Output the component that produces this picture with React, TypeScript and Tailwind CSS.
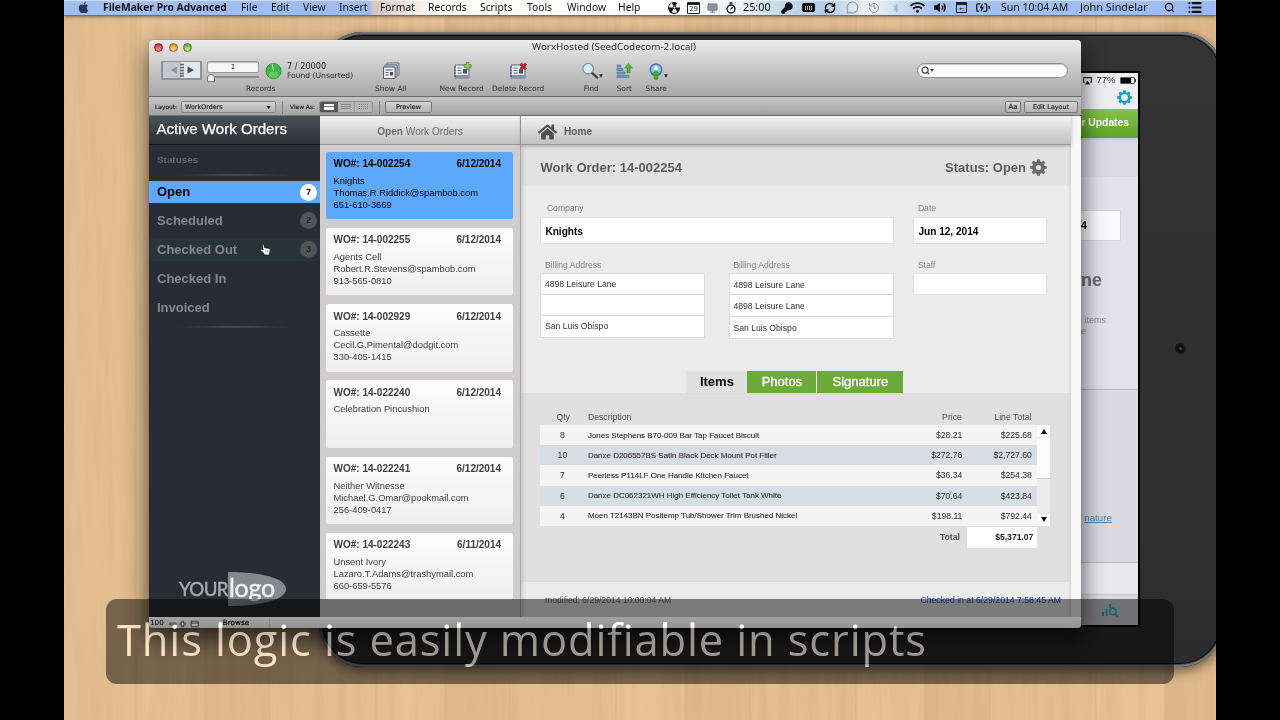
import React from 'react';
import { FaApple, FaHome, FaRadiation, FaWifi, FaBluetoothB } from 'react-icons/fa';
import { FiVolume2 } from 'react-icons/fi';
import {
  BatteryCharging,
  History,
  KeyRound,
  List,
  MessageCircle,
  Monitor,
  RefreshCw,
  Search,
  Timer,
} from 'lucide-react';

interface WorkOrder {
  id: string;
  date: string;
  lines: string[];
}

interface LineItem {
  qty: number;
  description: string;
  price: string;
  total: string;
}

const menus = [
  { label: 'File', width: 'w-[30px]' },
  { label: 'Edit', width: 'w-[32px]' },
  { label: 'View', width: 'w-[36px]' },
  { label: 'Insert', width: 'w-[41px]' },
  { label: 'Format', width: 'w-[48px]' },
  { label: 'Records', width: 'w-[52px]' },
  { label: 'Scripts', width: 'w-[47px]' },
  { label: 'Tools', width: 'w-[40px]' },
  { label: 'Window', width: 'w-[51px]' },
  { label: 'Help', width: 'w-[50px]' },
];

const statuses = [
  { label: 'Open', count: 7 },
  { label: 'Scheduled', count: 2 },
  { label: 'Checked Out', count: 3 },
  { label: 'Checked In' },
  { label: 'Invoiced' },
];

const workOrders: WorkOrder[] = [
  {
    id: '14-002254',
    date: '6/12/2014',
    lines: ['Knights', 'Thomas.R.Riddick@spambob.com', '651-610-3669'],
  },
  {
    id: '14-002255',
    date: '6/12/2014',
    lines: ['Agents Cell', 'Robert.R.Stevens@spambob.com', '913-565-0810'],
  },
  {
    id: '14-002929',
    date: '6/12/2014',
    lines: ['Cassette', 'Cecil.G.Pimental@dodgit.com', '330-405-1415'],
  },
  { id: '14-022240', date: '6/12/2014', lines: ['Celebration Pincushion'] },
  {
    id: '14-022241',
    date: '6/12/2014',
    lines: ['Neither Witnesse', 'Michael.G.Omar@pookmail.com', '256-409-0417'],
  },
  {
    id: '14-022243',
    date: '6/11/2014',
    lines: ['Unsent Ivory', 'Lazaro.T.Adams@trashymail.com', '660-659-5576'],
  },
];

const items: LineItem[] = [
  { qty: 8, description: 'Jones Stephens B70-009 Bar Tap Faucet Biscuit', price: '$28.21', total: '$225.68' },
  { qty: 10, description: 'Danze D206557BS Satin Black Deck Mount Pot Filler', price: '$272.76', total: '$2,727.60' },
  { qty: 7, description: 'Peerless P114LF One Handle Kitchen Faucet', price: '$36.34', total: '$254.38' },
  { qty: 6, description: 'Danze DC062321WH High Efficiency Toilet Tank White', price: '$70.64', total: '$423.84' },
  { qty: 4, description: 'Moen T2143BN Positemp Tub/Shower Trim Brushed Nickel', price: '$198.11', total: '$792.44' },
];

function Gear({ className, hole }: { className?: string; hole: number }) {
  return (
    <svg viewBox="-10 -10 20 20" className={className}>
      <g fill="currentColor">
        {[0, 45, 90, 135, 180, 225, 270, 315].map((a) => (
          <path key={a} d="M-2.2 -6 L-1.6 -9.8 H1.6 L2.2 -6 Z" transform={`rotate(${a})`} />
        ))}
      </g>
      <circle r={(7.4 + hole) / 2} fill="none" stroke="currentColor" strokeWidth={7.4 - hole} />
    </svg>
  );
}

function Wood() {
  return (
    <>
      <div className="absolute inset-0 bg-[#e3be91]" />
      <div className="absolute inset-0 bg-[repeating-linear-gradient(90deg,#e2bd8e00_0px,#e2bd8e00_71px,#b98c5a33_72px,#ecca9f55_73px,#ecca9f44_140px,#b98c5a33_141px,#c99f6c33_142px,#c99f6c22_205px,#b98c5a33_206px,#e2bd8e00_207px,#e2bd8e00_240px)]" />
      <svg className="absolute inset-0 h-full w-full opacity-40">
        <filter id="grain" x="0" y="0" width="100%" height="100%">
          <feTurbulence type="fractalNoise" baseFrequency="0.12 0.008" numOctaves="4" seed="7" />
          <feColorMatrix values="0 0 0 0 0.6  0 0 0 0 0.4  0 0 0 0 0.2  1.6 0 0 0 -0.6" />
        </filter>
        <rect width="100%" height="100%" filter="url(#grain)" />
      </svg>
    </>
  );
}

function MenuBar() {
  return (
    <div className="relative flex h-[16px] items-center border-b border-[#5d6f93] bg-[linear-gradient(90deg,#9fc0f3_0%,#9cbcf0_26.5%,#d8c2bf_26.8%,#e9dfda_29.5%,#fdfcfb_32%,#fff_53%,#e9f0f5_59%,#c5dbe8_62%,#b6cbe8_66%,#eef3f7_70%,#c6d8f2_73%,#a3c1f2_76%,#9bbbf0_100%)] pl-[13px] font-['Noto_Sans',sans-serif] text-[10.3px] leading-none whitespace-nowrap text-[#111] shadow-[0_1px_3px_#0006,inset_0_1px_1px_#fff8]">
      <FaApple className="h-[13px] w-[13px] text-[#2b3550]" />
      <span className="ml-[13px] w-[138px] font-bold">FileMaker Pro Advanced</span>
      {menus.map((menu) => (
        <span key={menu.label} className={menu.width}>
          {menu.label}
        </span>
      ))}
      <div className="flex w-[75px] items-center gap-[7px]">
        <span className="flex h-[12px] w-[12px] items-center justify-center rounded-full bg-[#111]">
          <FaRadiation className="h-[11px] w-[11px] text-white" />
        </span>
        <span className="flex h-[12px] w-[13px] items-center justify-center rounded-[1px] border border-t-[3px] border-[#222] bg-white text-[7.5px] leading-none">
          29
        </span>
        <Monitor className="h-[12px] w-[11px] fill-[#8a93a8] text-[#777]" />
        <Timer className="h-[12px] w-[12px]" strokeWidth={2.6} />
      </div>
      <span className="w-[38px] text-[10.8px]">25:00</span>
      <div className="flex w-[220px] items-center">
        <KeyRound className="h-[12px] w-[12px] fill-[#111]" strokeWidth={3} />
        <span className="ml-[9px] flex h-[9px] w-[13px] items-center justify-center gap-[1px] rounded-[2px] bg-[#111]">
          <i className="h-[4px] w-px bg-[#9ab]" />
          <i className="h-[4px] w-px bg-[#9ab]" />
          <i className="h-[4px] w-px bg-[#9ab]" />
          <i className="h-[4px] w-px bg-[#9ab]" />
        </span>
        <RefreshCw className="ml-[9px] h-[12px] w-[12px]" strokeWidth={3} />
        <MessageCircle className="ml-[10px] h-[13px] w-[13px] text-[#8d99a6]" />
        <History className="ml-[9px] h-[12px] w-[12px] text-[#8d99a6]" />
        <FaBluetoothB className="ml-[11px] h-[10px] w-[10px] text-[#a2adb8]" />
        <FaWifi className="ml-[9px] h-[13px] w-[15px]" />
        <FiVolume2 className="ml-[8px] h-[13px] w-[14px] fill-[#111]" />
        <span className="ml-[9px] flex h-[11px] w-[11px] items-center justify-center border-[1.5px] border-t-[3px] border-[#222] text-[6px] font-bold">
          +:
        </span>
        <BatteryCharging className="ml-[8px] h-[15px] w-[16px]" />
      </div>
      <span className="w-[79px] text-[10.5px]">Sun 10:04 AM</span>
      <span className="w-[84px] text-[10.9px]">John Sindelar</span>
      <Search className="h-[11px] w-[11px]" strokeWidth={3} />
      <List className="ml-[12px] h-[15px] w-[16px]" strokeWidth={3.4} />
    </div>
  );
}

function Tablet() {
  return (
    <div className="absolute top-[32px] left-[255px] flex h-[635px] w-[905px] justify-end rounded-[44px] bg-[#0c0c0c] p-[4px] shadow-[inset_0_0_0_2px_#77767a,inset_0_0_0_3px_#4a494b,0_4px_12px_#0008]">
      <div className="flex flex-1 items-stretch justify-end rounded-[40px] bg-[linear-gradient(180deg,#333_0%,#303030_70%,#2c2c2c_100%)]">
        <div className="mt-[35px] mb-[36px] flex w-[700px] flex-col items-stretch border-2 border-l-0 border-black bg-[#e4e2e9] font-['Liberation_Sans',Arial,sans-serif]">
          <div className="flex h-[15px] items-center justify-end gap-[4px] bg-[#eeedf1] pr-[2px] text-[9.5px] text-[#333]">
            <svg viewBox="0 0 10 9" className="h-[8px] w-[9px]">
              <path d="M2 6H.7V.7h8.6V6H8" fill="none" stroke="#222" strokeWidth="1.2" />
              <path d="M5 4l3 4.500H2z" fill="#222" />
            </svg>
            <span>77%</span>
            <span className="flex items-center">
              <i className="h-[7px] w-[15px] rounded-[1px] border border-[#555] bg-[linear-gradient(90deg,#000_78%,#eee_78%)]" />
              <i className="h-[3px] w-[1.500px] bg-[#333]" />
            </span>
          </div>
          <div className="flex h-[21px] items-center justify-end bg-[#eeedf1] pr-[6px] pb-[2px]">
            <Gear className="h-[15px] w-[15px] text-[#12a3bf]" hole={4.6} />
          </div>
          <div className="flex h-[29px] items-center justify-end bg-[linear-gradient(180deg,#82c443,#5fa42a)] pr-[9px] pb-[2px] text-[10.3px] font-bold text-white">
            r Updates
          </div>
          <div className="h-[39px] bg-[#dddbe2] shadow-[inset_0_2px_2px_#0001]" />
          <div className="mt-[33px] flex h-[31px] justify-end pr-[17px]">
            <div className="flex w-[60px] items-center border border-[#d6d4db] bg-[#fafafc] pl-[19px] text-[10.500px] font-bold text-black">
              4
            </div>
          </div>
          <div className="mt-[29px] flex justify-end pr-[36px] text-[18px] leading-[20px] font-bold text-[#6b6a6e]">
            ne
          </div>
          <div className="mt-[25px] flex justify-end pr-[32px] text-[9px] leading-[11px] text-[#8b8990]">
            items
          </div>
          <div className="flex justify-end pr-[52px] text-[9px] leading-[10px] text-[#8b8990]">e</div>
          <div className="mt-[53px] flex h-[174px] items-end justify-end border-y border-[#b9b7be] bg-[#dcdae1] pr-[26px] pb-[36px] text-[9.8px] text-[#4a7fae]">
            <span className="underline">nature</span>
          </div>
          <div className="h-[31px] bg-[#e8e7ec]" />
          <div className="flex flex-1 items-center justify-end border-t border-[#c5c5cc] bg-[#d9d8de] pt-[2px] pr-[20px]">
            <svg viewBox="0 0 16 14" className="h-[14px] w-[16px]" fill="none" stroke="#16c4dc" strokeWidth="2">
              <path d="M1 12V8M4.500 12V5M8 4V0" />
              <circle cx="11" cy="7.500" r="3.300" strokeWidth="1.400" />
              <path d="M13.500 10l2.500 3.500" strokeWidth="1.600" />
            </svg>
          </div>
        </div>
        <div className="flex w-[80px] items-start justify-center pt-[307px]">
          <i className="h-[11px] w-[11px] rounded-full bg-[radial-gradient(circle,#4d4d4d_8%,#0d0d0d_30%,#1b1b1b_70%,#2c2c2c)]" />
        </div>
      </div>
    </div>
  );
}

function RecordIcon({ badge }: { badge: 'add' | 'delete' }) {
  return (
    <svg viewBox="0 0 20 18" className="h-[18px] w-[20px]">
      <path d="M3 3h14v13H3z" fill="#eef1f4" stroke="#5d6c7c" />
      <path d="M3 13h14v3H3z" fill="#8796a6" />
      <path d="M5.500 6h4M5.500 8.500h4M5.500 11h4" stroke="#5d6c7c" />
      <path d="M11 7h4v4.500h-4z" fill="#4a5664" />
      <path d="M2 5h2M2 8h2M2 11h2M2 14h2" stroke="#333" strokeWidth=".8" />
      {badge === 'add' ? (
        <path d="M14.300 .5h2.600v2.200h2.300v2.600h-2.300v2.300h-2.600V5.300h-2.300V2.700h2.300z" fill="#9bd04d" stroke="#3f7d1d" strokeWidth=".7" />
      ) : (
        <path d="M12.500 1.500l5.500 6M18 1.500l-5.500 6" stroke="#b8282c" strokeWidth="2.800" />
      )}
    </svg>
  );
}

function ToolButton({ label, children }: { label: string; children: React.ReactNode }) {
  return (
    <div className="flex flex-col items-center">
      <div className="flex h-[20px] items-center">{children}</div>
      <span className="mt-[3px] leading-[10px]">{label}</span>
    </div>
  );
}

function Toolbar() {
  return (
    <div className="flex h-[57px] flex-col rounded-t-[4px] border-b border-[#6a6a6a] bg-[linear-gradient(180deg,#ececec_0%,#d2d2d2_35%,#a9a8a9_100%)] font-['DejaVu_Sans',sans-serif] text-[7.4px] whitespace-nowrap text-[#2c2c2c]">
      <div className="flex h-[15px] items-center">
        <div className="flex w-[60px] gap-[5.5px] pl-[5px]">
          <i className="h-[9px] w-[9px] rounded-full border border-[#8c2a28] bg-[radial-gradient(circle_at_50%_75%,#ff9a8f,#c8302c_70%)]" />
          <i className="h-[9px] w-[9px] rounded-full border border-[#9c6a22] bg-[radial-gradient(circle_at_50%_75%,#ffe08a,#dd9526_70%)]" />
          <i className="h-[9px] w-[9px] rounded-full border border-[#4f8030] bg-[radial-gradient(circle_at_50%_75%,#d0f59a,#66a93a_70%)]" />
        </div>
        <span className="flex-1 pr-[62px] text-center font-['Noto_Sans',sans-serif] text-[9.8px] text-[#333]">
          WorxHosted (SeedCodecom-2.local)
        </span>
      </div>
      <div className="flex h-[41px] items-start pl-[12px]">
        <div className="flex h-[39px] flex-col">
          <div className="flex h-[28px] items-start pt-[6px]">
            <div className="flex h-[19px] w-[41px] items-center justify-center border-2 border-t border-[#8c9298] bg-[linear-gradient(90deg,#c3c8cc_50%,#e5e8ea_50%)]">
              <svg viewBox="0 0 34 14" className="h-[14px] w-[34px]">
                <path d="M12 3.500v7L5.500 7z" fill="#8e959b" />
                <path d="M22.500 3.500v7l6.500-3.500z" fill="#4a5056" />
                <path d="M15 1.500h4M15 4.500h4M15 7.500h4M15 10.500h4M15 13h4" stroke="#5a6066" strokeWidth="1.300" />
              </svg>
            </div>
            <div className="ml-[5px] w-[52px]">
              <div className="h-[12px] rounded-[2px] border border-[#999] bg-[#f6f6f6] text-center text-[7px] leading-[11px] text-[#222] shadow-[inset_0_1px_1px_#0004]">
                1
              </div>
              <div className="mt-[3px] h-[2px] bg-[#8b8b8b]">
                <i className="block h-[8px] w-[8px] -translate-y-[2px] rounded-full rounded-b-[3px] border border-[#777] bg-[#f2f2f2]" />
              </div>
            </div>
            <svg viewBox="0 0 18 18" className="mt-px ml-[6px] h-[18px] w-[17px]">
              <circle cx="9" cy="9" r="8" fill="#42b649" stroke="#2f8c35" />
              <path d="M9 9L7.500 1.300" stroke="#c8f0c6" strokeWidth="1" />
              <ellipse cx="9" cy="13" rx="5" ry="3.500" fill="#6fd96a" opacity=".6" />
            </svg>
            <div className="ml-[5px] flex flex-col text-[#222]">
              <span className="text-[8.200px] leading-[10px]">7 / 20000</span>
              <span className="text-[7.600px] leading-[10px]">Found (Unsorted)</span>
            </div>
          </div>
          <span className="mt-px pl-[85px] leading-[10px]">Records</span>
        </div>
        <div className="ml-[22px] flex pt-[6px]">
          <ToolButton label="Show All">
            <svg viewBox="0 0 18 18" className="h-[18px] w-[18px]">
              <path d="M5 1h12v12h-2V3H5z" fill="#d5dade" stroke="#56616c" strokeWidth=".8" />
              <path d="M3 3h12v12h-2V5H3z" fill="#d5dade" stroke="#56616c" strokeWidth=".8" />
              <path d="M1.500 5h11.500v11.500H1.500z" fill="#eef0f2" stroke="#56616c" />
              <path d="M3.500 8h7M3.500 10.500h3M3.500 13h3" stroke="#56616c" />
              <path d="M8 10h3v3.500H8z" fill="#444f5a" />
            </svg>
          </ToolButton>
          <div className="ml-[33px]">
            <ToolButton label="New Record">
              <RecordIcon badge="add" />
            </ToolButton>
          </div>
          <div className="ml-[8.5px]">
            <ToolButton label="Delete Record">
              <RecordIcon badge="delete" />
            </ToolButton>
          </div>
          <div className="ml-[35px]">
            <ToolButton label="Find">
              <svg viewBox="-1 0 24 20" className="h-[19px] w-[24px]">
                <path d="M11.500 11l6 5.500" stroke="#444" strokeWidth="2.500" strokeLinecap="round" />
                <circle cx="8" cy="7" r="5.500" fill="#d3edf2" stroke="#7c929d" strokeWidth="1.300" />
                <path d="M19.500 13h4l-2 3.500z" fill="#222" />
              </svg>
            </ToolButton>
          </div>
          <div className="ml-[12px]">
            <ToolButton label="Sort">
              <svg viewBox="0 0 18 18" className="h-[18px] w-[18px]">
                <path d="M2 3h4v2H2zM2 6.500h6v2H2zM2 10h8v2H2zM2 13.500h12v2H2z" fill="#6f9cc4" stroke="#44698c" strokeWidth=".6" />
                <path d="M13.500 1.500L17.500 6H15v5h-3V6H9.500z" fill="#4dbb38" stroke="#2b8420" strokeWidth=".5" />
              </svg>
            </ToolButton>
          </div>
          <div className="ml-[11px]">
            <ToolButton label="Share">
              <svg viewBox="-1 0 24 20" className="h-[19px] w-[24px]">
                <circle cx="11" cy="8" r="6" fill="#8cc0ea" stroke="#3a78b4" strokeWidth="1.600" />
                <circle cx="11" cy="6.500" r="2.400" fill="#e4f2fb" />
                <path d="M11 9l4.500 4.500H13V18H9v-4.500H6.500z" fill="#45a92f" stroke="#2b7d1e" strokeWidth=".6" />
                <path d="M19.500 13h4l-2 3.500z" fill="#222" />
              </svg>
            </ToolButton>
          </div>
        </div>
        <div className="mt-[8px] mr-[13px] ml-auto flex h-[15px] w-[151px] items-center rounded-full border border-[#8c8c8c] bg-[#fbfbfb] pl-[3px] shadow-[inset_0_1px_1px_#0003]">
          <Search className="h-[9px] w-[9px] text-[#444]" strokeWidth={3} />
          <svg viewBox="0 0 4 3" className="h-[3px] w-[4px]">
            <path d="M0 0h4L2 3z" fill="#444" />
          </svg>
        </div>
      </div>
    </div>
  );
}

function LayoutBar() {
  return (
    <div className="flex h-[19px] items-center border-b border-[#707070] bg-[linear-gradient(180deg,#c4c4c4,#a5a4a5)] pt-[2px] pr-[3px] pl-[6px] font-['DejaVu_Sans',sans-serif] text-[6.4px] whitespace-nowrap text-[#1c1c1c] [-webkit-text-stroke:0.15px]">
      <span className="w-[26px] text-[5.9px]">Layout:</span>
      <span className="flex h-[12px] w-[95px] items-center justify-between rounded-[2px] border border-[#828282] bg-[linear-gradient(180deg,#d2d2d2,#b2b2b2)] pt-px pr-[4px] pl-[3px]">
        WorkOrders
        <svg viewBox="0 0 6 4" className="h-[3px] w-[5px]">
          <path d="M0 0h6L3 4z" fill="#111" />
        </svg>
      </span>
      <i className="ml-[6px] h-[13px] w-px bg-[#7d7d7d]" />
      <span className="ml-[7px] w-[29px] text-[5.9px]">View As:</span>
      <span className="flex h-[12px] w-[54px] overflow-hidden rounded-[2px] border border-[#8c8c8c] bg-[#b6b6b6]">
        <i className="flex h-full w-[18px] items-center justify-center bg-[#555]">
          <i className="h-[6px] w-[10px] bg-[linear-gradient(180deg,#fff_0_2px,#777_2px_3px,#fff_3px)]" />
        </i>
        <i className="flex h-full w-[17px] items-center justify-center border-r border-[#999]">
          <i className="h-[6px] w-[10px] bg-[repeating-linear-gradient(180deg,#888_0_1px,#bbb_1px_2px)]" />
        </i>
        <i className="flex h-full flex-1 items-center justify-center">
          <i className="h-[6px] w-[10px] bg-[repeating-linear-gradient(90deg,#bbb0_0_1px,#bbb_1px_2px),repeating-linear-gradient(180deg,#777_0_1px,#bbb_1px_2px)]" />
        </i>
      </span>
      <i className="ml-[6px] h-[13px] w-px bg-[#7d7d7d]" />
      <span className="ml-[5px] flex h-[12px] w-[47px] items-center justify-center rounded-[2px] border border-[#777] bg-[linear-gradient(180deg,#d4d4d4,#b4b4b4)] pt-px">
        Preview
      </span>
      <span className="ml-auto flex h-[12px] w-[16px] items-center justify-center rounded-[2px] border border-[#777] bg-[linear-gradient(180deg,#d4d4d4,#b4b4b4)] text-[7px]">
        Aa
      </span>
      <span className="ml-[3px] flex h-[12px] w-[54px] items-center justify-center rounded-[2px] border border-[#777] bg-[linear-gradient(180deg,#d4d4d4,#b4b4b4)] pt-px">
        Edit Layout
      </span>
    </div>
  );
}

function Sidebar() {
  return (
    <div className="relative flex w-[171px] flex-col bg-[#282d32]">
      <div className="flex h-[29px] items-center border-b border-[#14171a] bg-[linear-gradient(180deg,#475056,#2c3236)] pb-[2px] pl-[7.5px] text-[15.1px] text-white [-webkit-text-stroke:0.25px]">
        Active Work Orders
      </div>
      <div className="mt-[8px] h-[13px] pl-[8px] text-[9.9px] leading-[13px] font-bold text-[#62676b]">Statuses</div>
      <i className="mx-[28px] mt-[8px] h-[2px] bg-[linear-gradient(90deg,transparent,#454b50,transparent)]" />
      <div className="mt-[5px] flex flex-col gap-[6.85px]">
        {statuses.map((status, i) => (
          <div
            key={status.label}
            className={`flex h-[22px] items-center justify-between pr-[3px] pl-[8px] text-[13px] font-bold ${
              i === 0 ? 'bg-[#5ca8fa] text-black' : i === 2 ? 'bg-[#29333a] text-[#85898c]' : 'text-[#85898c]'
            }`}
          >
            {status.label}
            {status.count && (
              <span
                className={`flex h-[17px] w-[17px] items-center justify-center rounded-full text-[8.5px] ${
                  i === 0 ? 'bg-white text-black' : 'bg-[#505559] text-[#1d2124]'
                }`}
              >
                {status.count}
              </span>
            )}
          </div>
        ))}
      </div>
      <i className="mx-[28px] mt-[8px] h-[2px] bg-[linear-gradient(90deg,transparent,#454b50,transparent)]" />
      <div className="mt-auto mb-[11px] flex h-[34px] items-center pl-[30px] font-['Lato',sans-serif]">
        <span className="w-[49px] text-[18.7px] leading-none tracking-[-0.6px] text-[#a9acaf] [-webkit-text-stroke:0.4px]">
          YOUR
        </span>
        <div className="relative flex h-[34px] w-[58px] items-center">
          <svg viewBox="0 0 58 34" className="absolute inset-0 h-full w-full">
            <path d="M0 0C32 0 58 6 58 17S32 34 0 34Z" fill="#85898d" />
          </svg>
          <span className="relative pb-[3px] pl-[1px] text-[25px] leading-none tracking-[-0.3px] text-[#f2f2f2] [-webkit-text-stroke:0.4px]">
            logo
          </span>
        </div>
      </div>
      <svg viewBox="0 0 12 14" className="absolute top-[127px] left-[111px] h-[13px] w-[11px]">
        <path
          d="M2.500 1.500c.7-.6 1.500-.3 1.700.5L5 5l5 .8c.9.200 1.300.8 1.200 1.700L10.500 11 10 13H5L3.500 10.500 1 8c-.5-.8.200-1.500 1-1.200l1.500.8z"
          fill="#fff"
          stroke="#111"
          strokeWidth=".8"
        />
        <path d="M6.500 8v2M8.300 8v2" stroke="#333" strokeWidth=".6" />
      </svg>
    </div>
  );
}

function OrderList() {
  return (
    <div className="flex w-[200px] flex-col overflow-hidden bg-[#cfcdce]">
      <div className="flex h-[29px] shrink-0 items-center justify-center border-b border-[#979797] bg-[linear-gradient(180deg,#f2f2f2,#c2c1c2)] pt-[3px] text-[10.1px] text-[#6c6c6c]">
        <b>Open</b>&nbsp;Work Orders
      </div>
      <div className="mt-[6.5px] flex flex-col gap-[8.75px] pr-[7px] pl-[6px]">
        {workOrders.map((order, i) => (
          <div
            key={order.id}
            className={`flex h-[67.5px] flex-col rounded-[2px] pr-[12px] pl-[7.5px] ${
              i === 0 ? 'bg-[#5ca8fa] text-black' : 'bg-[linear-gradient(180deg,#fdfdfd,#f0eff0)] text-[#404040]'
            }`}
          >
            <div className="mt-[5.5px] mb-[4.5px] flex justify-between text-[10px] leading-[13px] font-bold">
              <span>WO#: {order.id}</span>
              <span>{order.date}</span>
            </div>
            {order.lines.map((line) => (
              <span key={line} className="text-[9.35px] leading-[12.2px]">
                {line}
              </span>
            ))}
          </div>
        ))}
      </div>
    </div>
  );
}

function Label({ children }: { children: string }) {
  return <div className="h-[12px] text-[8.6px] leading-[12px] text-[#858585]">{children}</div>;
}

function Address({ lines, className }: { lines: string[]; className: string }) {
  return (
    <div className="w-[165px]">
      <div className="pl-[4.5px]">
        <Label>Billing Address</Label>
      </div>
      <div className="mt-[2px] flex flex-col divide-y divide-[#d9d9d9] border border-[#dcdcdc] bg-white">
        {lines.map((line, i) => (
          <div key={i} className={`pl-[3.5px] text-[8.65px] text-[#333] ${className}`}>
            {line}
          </div>
        ))}
      </div>
    </div>
  );
}

function LineItems() {
  return (
    <div className="h-[189px] shrink-0 bg-[#e1e0e1] pt-[17.5px] pl-[19.4px] shadow-[inset_4px_0_4px_-2px_#0002,inset_-2px_0_0_#d8d7d8]">
      <div className="flex h-[14.5px] w-[491px] text-[8.7px] leading-[13px] text-[#4c4c4c]">
        <span className="w-[47.5px] pr-[2px] text-center">Qty</span>
        <span className="flex-1">Description</span>
        <span className="w-[69px] text-right">Price</span>
        <span className="w-[69.5px] text-right">Line Total</span>
      </div>
      <div className="flex">
        <div className="w-[497px]">
          {items.map((item) => (
            <div
              key={item.qty}
              className="flex h-[20.2px] items-center pt-px pr-[5.5px] text-[8.65px] text-[#2e2e2e] odd:bg-[#f4f4f4] even:bg-[#d6dde4]"
            >
              <span className="w-[44px] text-center">{item.qty}</span>
              <span className="flex-1 pl-[3.5px] text-[7.98px] [-webkit-text-stroke:0.1px]">{item.description}</span>
              <span>{item.price}</span>
              <span className="w-[69.5px] text-right">{item.total}</span>
            </div>
          ))}
        </div>
        <div className="flex w-[12.5px] flex-col bg-[#ececec]">
          <span className="flex h-[12px] items-center justify-center bg-[#fbfbfb]">
            <svg viewBox="0 0 6 5" className="h-[5px] w-[6px]">
              <path d="M0 5h6L3 0z" fill="#111" />
            </svg>
          </span>
          <i className="mt-px h-[41px] border-b border-[#ccc] bg-[#fdfdfd]" />
          <span className="mt-auto flex h-[12px] items-center justify-center bg-[#fbfbfb]">
            <svg viewBox="0 0 6 5" className="h-[5px] w-[6px]">
              <path d="M0 0h6L3 5z" fill="#111" />
            </svg>
          </span>
        </div>
      </div>
      <div className="mt-px flex h-[21px] w-[497px] items-center justify-end text-[8.6px] font-bold text-[#4c4c4c]">
        Total
        <span className="ml-[7px] flex h-full w-[70.500px] items-center justify-end rounded-[1px] bg-white pr-[4px] text-[#222]">
          $5,371.07
        </span>
      </div>
    </div>
  );
}

function Detail() {
  return (
    <div className="flex flex-1 border-l border-[#a5a4a5] bg-[#f8f7f8]">
      <div className="flex w-[550px] flex-col bg-[#ecebec] shadow-[inset_4px_0_4px_-2px_#0002,inset_-2px_0_0_#dddcdd]">
        <div className="flex h-[29px] shrink-0 items-center border-b border-[#979797] bg-[linear-gradient(180deg,#f2f2f2,#c2c1c2)] pt-[4px] pl-[17px] text-[10.1px] font-bold text-[#5a5a5a] shadow-[0_1px_4px_#0004]">
          <FaHome className="mr-[7px] h-[18px] w-[19px] text-[#4f4f4f]" />
          Home
        </div>
        <div className="flex h-[41px] shrink-0 items-center justify-between bg-[#00000009] pt-[4px] pr-[24px] pl-[19.5px] text-[13px] font-bold text-[#5c5c5c]">
          <span>Work Order: 14-002254</span>
          <span className="flex items-center gap-[4px]">
            Status: Open
            <Gear className="h-[17px] w-[17px] text-[#6c6c6c]" hole={3} />
          </span>
        </div>
        <div className="flex h-[207px] shrink-0 flex-col pl-[19.4px]">
          <div className="flex gap-[19px] pt-[16px]">
            <div className="w-[353.5px]">
              <div className="pl-[6.5px]">
                <Label>Company</Label>
              </div>
              <div className="mt-[3px] flex h-[27px] items-center rounded-[1px] border border-[#dedede] bg-white pt-[2px] pl-[4px] text-[10.1px] font-bold text-black">
                Knights
              </div>
              <div className="mt-[15px] flex justify-between">
                <Address className="h-[21px] leading-[21px]" lines={['4898 Leisure Lane', '', 'San Luis Obispo']} />
                <Address className="h-[21.3px] leading-[22px]" lines={['4898 Leisure Lane', '4898 Leisure Lane', 'San Luis Obispo']} />
              </div>
            </div>
            <div className="w-[134.5px]">
              <div className="pl-[5px]">
                <Label>Date</Label>
              </div>
              <div className="mt-[3px] flex h-[27px] items-center rounded-[1px] border border-[#dedede] bg-white pt-[2px] pl-[4.5px] text-[10.1px] font-bold text-black">
                Jun 12, 2014
              </div>
              <div className="mt-[15px] pl-[5px]">
                <Label>Staff</Label>
              </div>
              <div className="mt-[2px] h-[22px] rounded-[1px] border border-[#dedede] bg-white" />
            </div>
          </div>
          <div className="mt-auto ml-[146px] flex h-[22px] text-[13px] leading-[22px] text-white">
            <span className="w-[61px] bg-[#e1e0e1] text-center font-bold text-black">Items</span>
            <span className="w-[69px] bg-[#6bab3a] text-center [-webkit-text-stroke:0.35px]">Photos</span>
            <span className="ml-px w-[86px] bg-[#6bab3a] text-center [-webkit-text-stroke:0.35px]">Signature</span>
          </div>
        </div>
        <LineItems />
        <div className="flex flex-1 items-center justify-between pt-[2px] pr-[10px] pl-[24px] text-[8.6px]">
          <span className="text-[#666]">modified: 6/29/2014 10:00:04 AM</span>
          <span className="text-[8.7px] text-[#2742c4]">Checked in at 6/29/2014 7:58:45 AM</span>
        </div>
      </div>
    </div>
  );
}

function AppWindow() {
  return (
    <div className="absolute top-[40px] left-[85px] flex h-[588px] w-[932px] flex-col rounded-t-[4px] rounded-b-[3px] bg-[#b5b4b5] font-['Liberation_Sans',Arial,sans-serif] shadow-[0_10px_22px_2px_#0009,0_0_1px_#0008]">
      <Toolbar />
      <LayoutBar />
      <div className="flex h-[501px]">
        <Sidebar />
        <OrderList />
        <Detail />
      </div>
      {/* footer stays above the caption backdrop */}
      <div className="relative z-10 flex h-[11px] items-center overflow-hidden rounded-b-[3px] bg-[linear-gradient(180deg,#a3a3a3,#929292)] pt-[2px] pl-[1px] font-['DejaVu_Sans',sans-serif] text-[7px] text-black">
        <span className="text-[7.2px]">100</span>
        <svg viewBox="0 0 34 9" className="ml-[3px] h-[8px] w-[34px]" fill="#aaa" stroke="#222" strokeWidth=".9">
          <path d="M1 3.500h7v2H1zM14.500 1.500h2V3.500h2v2h-2v2h-2v-2h-2v-2h2zM25 1.500h8v6h-8zM25 3.500h8" />
        </svg>
        <span className="ml-[22px] text-[7.3px] [-webkit-text-stroke:0.2px]">Browse</span>
        <i className="ml-[20px] h-full w-px bg-[#888]" />
      </div>
    </div>
  );
}

function Caption() {
  return (
    <>
      <div className="absolute top-[599px] left-[42px] h-[85px] w-[1068px] rounded-[11px] bg-black/48" />
      <div className="absolute top-[599px] left-[42px] z-20 flex h-[85px] w-[1068px] items-center pb-[3px] pl-[11px] mix-blend-plus-lighter">
        <span className="font-['Open_Sans',sans-serif] text-[43.5px] leading-none font-normal tracking-[0.85px] whitespace-nowrap text-[#87837f]">
          This logic is easily modifiable in scripts
        </span>
      </div>
    </>
  );
}

export default function App() {
  return (
    <div className="flex h-[720px] w-[1280px] justify-center overflow-hidden bg-black">
      <div className="relative w-[1152px] overflow-hidden">
        <Wood />
        <MenuBar />
        <Tablet />
        <AppWindow />
        <Caption />
      </div>
    </div>
  );
}
